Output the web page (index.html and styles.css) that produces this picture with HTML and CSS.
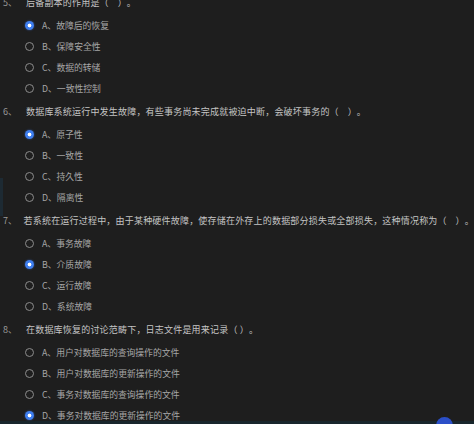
FILE: index.html
```html
<!DOCTYPE html>
<html lang="zh-CN">
    <head>
        <title>数据库恢复 练习</title>
        <meta charset="utf-8">
        <meta name="viewport" content="width=device-width, initial-scale=1">
        <link rel="stylesheet" href="styles.css">
    </head>
    <body>
        <div class="side-glow"></div>
        <div class="quiz">
            <div class="question">
                <div class="q-title"><span class="q-num">5、</span>后备副本的作用是（&nbsp;&nbsp;&nbsp;&nbsp;）。</div>
                <div class="option"><span class="radio checked"></span>A、故障后的恢复</div>
                <div class="option"><span class="radio"></span>B、保障安全性</div>
                <div class="option"><span class="radio"></span>C、数据的转储</div>
                <div class="option"><span class="radio"></span>D、一致性控制</div>
            </div>
            <div class="question">
                <div class="q-title"><span class="q-num">6、</span>数据库系统运行中发生故障，有些事务尚未完成就被迫中断，会破坏事务的（&nbsp;&nbsp;&nbsp;&nbsp;）。</div>
                <div class="option"><span class="radio checked"></span>A、原子性</div>
                <div class="option"><span class="radio"></span>B、一致性</div>
                <div class="option"><span class="radio"></span>C、持久性</div>
                <div class="option"><span class="radio"></span>D、隔离性</div>
            </div>
            <div class="question">
                <div class="q-title"><span class="q-num">7、</span>若系统在运行过程中，由于某种硬件故障，使存储在外存上的数据部分损失或全部损失，这种情况称为（&nbsp;&nbsp;&nbsp;&nbsp;）。</div>
                <div class="option"><span class="radio"></span>A、事务故障</div>
                <div class="option"><span class="radio checked"></span>B、介质故障</div>
                <div class="option"><span class="radio"></span>C、运行故障</div>
                <div class="option"><span class="radio"></span>D、系统故障</div>
            </div>
            <div class="question">
                <div class="q-title"><span class="q-num">8、</span>在数据库恢复的讨论范畴下，日志文件是用来记录（&nbsp;）。</div>
                <div class="option"><span class="radio"></span>A、用户对数据库的查询操作的文件</div>
                <div class="option"><span class="radio"></span>B、用户对数据库的更新操作的文件</div>
                <div class="option"><span class="radio"></span>C、事务对数据库的查询操作的文件</div>
                <div class="option"><span class="radio checked"></span>D、事务对数据库的更新操作的文件</div>
            </div>
        </div>
        <div class="bottom-bar"></div>
        <div class="float-btn"></div>
    </body>
</html>
```

FILE: styles.css
```css
html, body{
margin: 0;
padding: 0;
height: 100%;
overflow: hidden;
background-color: #1e1e1e;
}
body{
font-family: "Noto Sans CJK SC", "Noto Sans", sans-serif;
font-size: 9px;
color: #a6a6a6;
text-spacing-trim: space-all;
}
.quiz{
margin-top: -10px;
}
.question{
height: 109px;
}
.q-title{
height: 25px;
display: flex;
align-items: center;
color: #c4c4c4;
white-space: nowrap;
letter-spacing: 0.2px;
}
.q-num{
width: 26px;
padding-left: 3px;
box-sizing: border-box;
color: #9a9a9a;
letter-spacing: 0;
}
.option{
height: 21px;
display: flex;
align-items: center;
padding-left: 25px;
white-space: nowrap;
font-size: 8.8px;
}
.radio{
width: 9px;
height: 9px;
border: 1px solid #8c8c8c;
border-radius: 50%;
margin-right: 8px;
box-sizing: border-box;
}
.radio.checked{
border: none;
background: radial-gradient(circle, #ffffff 0 1.6px, #3f7ff0 2.2px);
box-shadow: 0 0 2px rgba(70, 130, 255, 0.6);
}
.side-glow{
position: absolute;
left: 0;
top: 178px;
width: 3px;
height: 38px;
background: #1d2a33;
}
.bottom-bar{
position: absolute;
left: 0;
right: 0;
bottom: 0;
height: 3px;
background: #18262c;
}
.float-btn{
position: absolute;
left: 436px;
bottom: -10px;
width: 17px;
height: 17px;
border-radius: 50%;
background: #2b4fc8;
}
```
